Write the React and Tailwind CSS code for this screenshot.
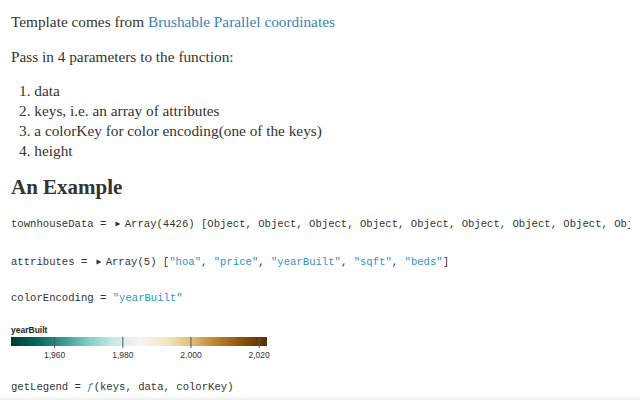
import React from 'react';

const serif = { fontFamily: '"Liberation Serif", serif' };

// BrBG reversed, teal -> brown
const stops = ["#003c30", "#01665e", "#35978f", "#80cdc1", "#c7eae5", "#f5f5f5", "#f6e8c3", "#dfc27d", "#bf812d", "#8c510a", "#543005"];

function Caret() {
    return (
        <svg width="8" height="8" viewBox="0 0 8 8" className="inline-block ml-[1px] mr-[3px]">
            <path d="M1.5 1.5 L6.5 4 L1.5 6.5 Z" fill="#333" />
        </svg>
    );
}

function Str({ children }) {
    return <span className="text-[#2a95c9]">"{children}"</span>;
}

function Legend() {
    const w = 256;
    const ticks = [1960, 1980, 2000, 2020];
    const scale = (y) => ((y - 1947.2) / (2022.3 - 1947.2)) * w;
    return (
        <svg width="280" height="38" className="block" style={{ fontFamily: '"Liberation Sans", sans-serif' }}>
            <defs>
                <linearGradient id="brbg" x1="0" x2="1" y1="0" y2="0">
                    {stops.map((c, i) => (
                        <stop key={i} offset={i / (stops.length - 1)} stopColor={c} />
                    ))}
                </linearGradient>
            </defs>
            <text x="0" y="9" fontSize="8.5" fontWeight="bold" fill="#222">yearBuilt</text>
            <rect x="0" y="13" width={w} height="9" fill="url(#brbg)" />
            {ticks.map((t) => (
                <g key={t} transform={`translate(${scale(t)},0)`}>
                    <line y1="13" y2="24" stroke="#555" strokeWidth="1" />
                    <text y="34" textAnchor="middle" fontSize="8.5" fill="#333">{t.toLocaleString()}</text>
                </g>
            ))}
        </svg>
    );
}

export default function App() {
    return (
        <div className="w-[640px] h-[400px] overflow-hidden bg-white text-[#333] pl-[11px] relative">
            <div style={serif} className="text-[15.3px] leading-[20px]">
                <p className="pt-[12px]">
                    Template comes from <a className="text-[#3b82b6]">Brushable Parallel coordinates</a>
                </p>
                <p className="mt-[15px]">Pass in 4 parameters to the function:</p>
                <ol className="mt-[14px] pl-[8px]">
                    <li>1. data</li>
                    <li>2. keys, i.e. an array of attributes</li>
                    <li>3. a colorKey for color encoding(one of the keys)</li>
                    <li>4. height</li>
                </ol>
                <h2 className="mt-[13px] text-[21px] font-bold leading-[26px]">An Example</h2>
            </div>

            {/* notebook cells are clipped at the right edge */}
            <div className="w-[619px] overflow-hidden font-['Liberation_Mono',monospace] text-[10.6px] leading-[14px] whitespace-nowrap">
                <div className="mt-[17px]">
                    townhouseData = <Caret />Array(4426) [Object, Object, Object, Object, Object, Object, Object, Object, Object, Object]
                </div>
                <div className="mt-[24px]">
                    attributes = <Caret />Array(5) [<Str>hoa</Str>, <Str>price</Str>, <Str>yearBuilt</Str>, <Str>sqft</Str>, <Str>beds</Str>]
                </div>
                <div className="mt-[22px]">
                    colorEncoding = <Str>yearBuilt</Str>
                </div>
                <div className="mt-[19px]">
                    <Legend />
                </div>
                <div className="mt-[18px]">
                    getLegend = <span className="italic text-[#3b82b6]">ƒ</span>(keys, data, colorKey)
                </div>
            </div>
            <div className="absolute left-0 right-0 bottom-0 h-[4px] bg-gradient-to-b from-white to-[#eeeeee]" />
        </div>
    );
}
